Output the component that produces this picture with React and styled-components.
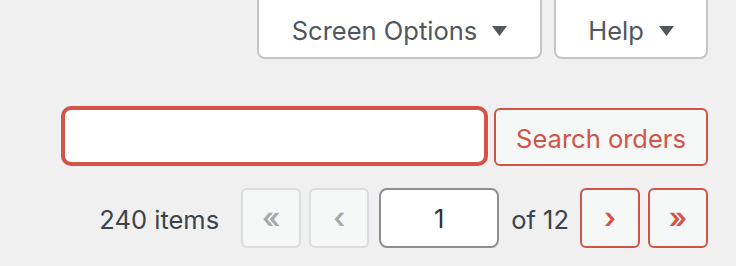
import React, { useState } from "react";
import styled, { createGlobalStyle } from "styled-components";

const GlobalStyle = createGlobalStyle`
  html, body {
    margin: 0;
    padding: 0;
    background: #f0f0f1;
    font-family: Inter, "Noto Sans", sans-serif;
  }
`;

const accent = "#d15447";

function Caret() {
  return (
    <svg width="15" height="10" viewBox="0 0 15 10" aria-hidden="true">
      <path d="M0 0h15L7.5 10z" fill="#50575e" />
    </svg>
  );
}

function App() {
  const [page, setPage] = useState("1");
  const [query, setQuery] = useState("");

  return (
    <Wrap>
      <GlobalStyle />
      <ScreenMeta>
        <MetaTab $width={285}>
          Screen Options <Caret />
        </MetaTab>
        <MetaTab $width={154}>
          Help <Caret />
        </MetaTab>
      </ScreenMeta>

      <SearchBox>
        <SearchInput
          type="search"
          value={query}
          onChange={(e) => setQuery(e.target.value)}
        />
        <SearchButton type="button">Search orders</SearchButton>
      </SearchBox>

      <Pages>
        <Count>240 items</Count>
        <NavButton $disabled>«</NavButton>
        <NavButton $disabled>‹</NavButton>
        <PageInput value={page} onChange={(e) => setPage(e.target.value)} />
        <Total>of 12</Total>
        <NavButton>›</NavButton>
        <NavButton>»</NavButton>
      </Pages>
    </Wrap>
  );
}

export default App;

const Wrap = styled.div`
  padding-right: 28px;
  display: flex;
  flex-direction: column;
  align-items: flex-end;
`;

const ScreenMeta = styled.div`
  display: flex;
  gap: 12px;
`;

const MetaTab = styled.button`
  width: ${(p) => p.$width}px;
  height: 59px;
  box-sizing: border-box;
  display: flex;
  align-items: center;
  justify-content: center;
  gap: 15px;
  padding: 4px 0 0;
  background: #fff;
  border: 2px solid #c3c4c7;
  border-top: none;
  border-radius: 0 0 8px 8px;
  font-family: inherit;
  font-size: 25.5px;
  color: #50575e;
  cursor: pointer;
`;

const SearchBox = styled.div`
  margin-top: 47px;
  height: 60px;
  display: flex;
  align-items: center;
  gap: 8px;
`;

const SearchInput = styled.input`
  width: 423px;
  height: 56px;
  box-sizing: border-box;
  margin: 0;
  border: 2px solid ${accent};
  box-shadow: 0 0 0 2px ${accent};
  border-radius: 8px;
  background: #fff;
  outline: none;
  font-size: 26px;
  padding: 0 16px;
`;

const SearchButton = styled.button`
  width: 214px;
  height: 58px;
  box-sizing: border-box;
  margin-top: 2px;
  border: 2px solid ${accent};
  border-radius: 6px;
  background: #f6f7f7;
  color: ${accent};
  font-family: inherit;
  font-size: 25.5px;
  padding: 2px 0 0;
  cursor: pointer;
`;

const Pages = styled.div`
  margin-top: 22px;
  height: 60px;
  display: flex;
  align-items: center;
  gap: 8px;
  color: #3c434a;
  font-size: 25.5px;
`;

const Count = styled.span`
  margin-right: 14px;
  padding-top: 2px;
`;

const NavButton = styled.span`
  width: 60px;
  height: 60px;
  box-sizing: border-box;
  display: flex;
  align-items: center;
  justify-content: center;
  padding-bottom: 2px;
  border: 2px solid ${(p) => (p.$disabled ? "#dcdcde" : accent)};
  border-radius: 6px;
  background: #f6f7f7;
  color: ${(p) => (p.$disabled ? "#a7aaad" : accent)};
  font-size: 29px;
  font-weight: 600;
`;

const PageInput = styled.input`
  width: 120px;
  height: 60px;
  box-sizing: border-box;
  margin: 0 0 0 2px;
  border: 2px solid #8c8f94;
  border-radius: 8px;
  background: #fff;
  text-align: center;
  font-family: inherit;
  font-size: 25.5px;
  color: #2c3338;
  outline: none;
`;

const Total = styled.span`
  margin: 0 3px 0 4px;
  padding-top: 2px;
`;
